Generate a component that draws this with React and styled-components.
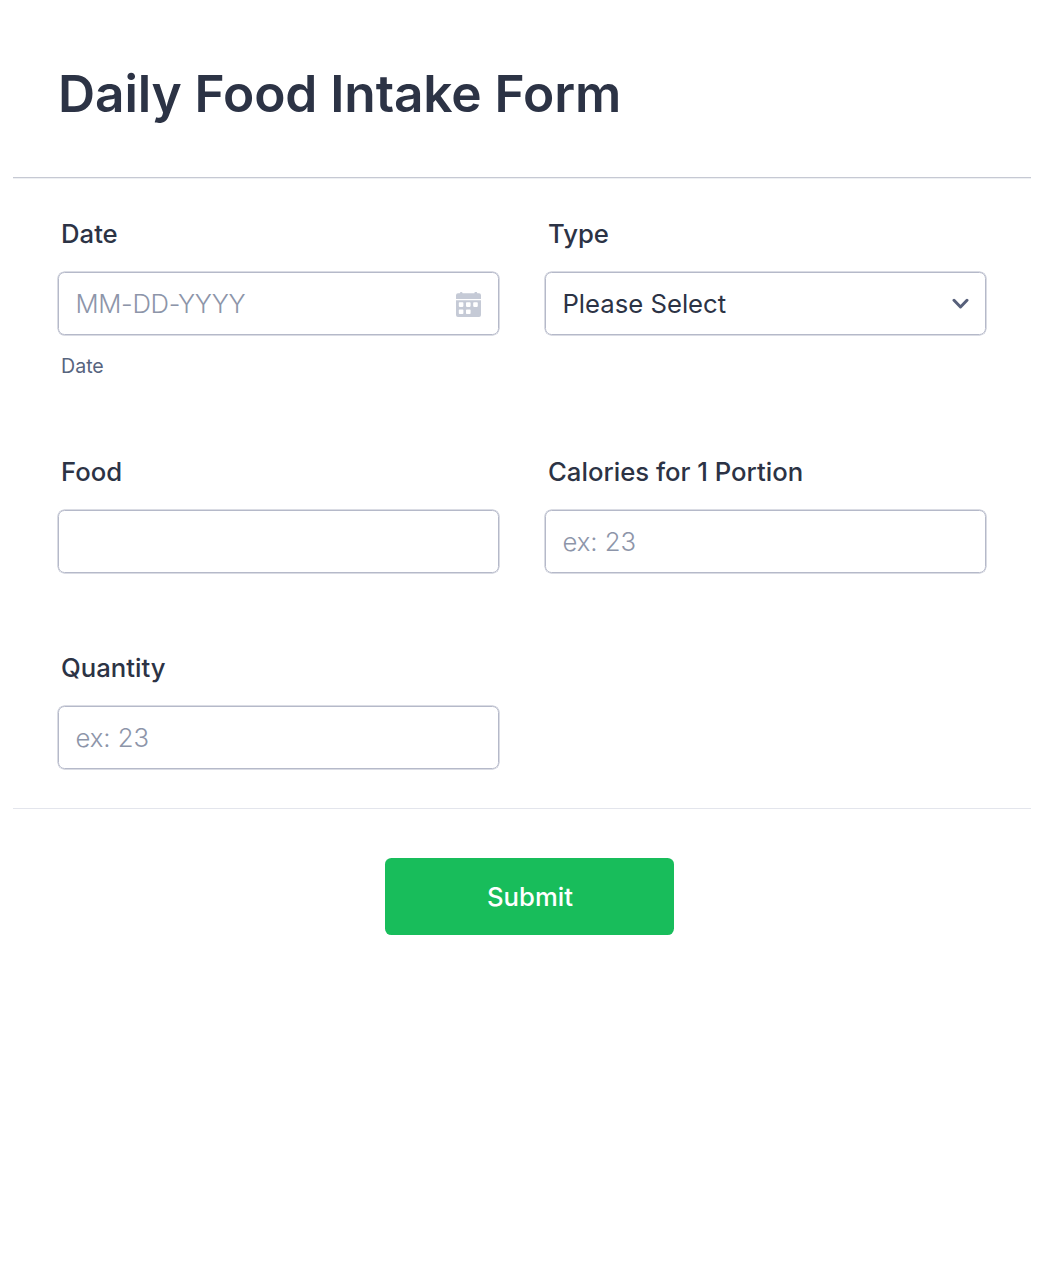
import React from 'react';
import styled, { createGlobalStyle } from 'styled-components';

const GlobalStyle = createGlobalStyle`
  :root {
    --ink: #2c3345;
    --muted: #57647e;
    --placeholder: #8d95a9;
    --border: #b5b9c9;
    --green: #18bd5b;
  }

  *,
  *::before,
  *::after {
    box-sizing: border-box;
  }

  body {
    margin: 0;
    background: #fff;
    color: var(--ink);
    font-family: Inter, sans-serif;
  }
`;

const Form = styled.form`
  min-height: 1285px;
  padding: 0 13px;
`;

const Header = styled.header`
  height: 178px;
  padding: 62px 45px 0;
  border-bottom: 1px solid #c6c9d3;
  box-shadow: 0 0.4px 0 #d5d8e0;
`;

const Title = styled.h1`
  margin: 0;
  font-size: 51.4px;
  font-weight: 600;
  letter-spacing: -0.1px;
  line-height: 62px;
`;

const Fields = styled.div`
  display: grid;
  grid-template-columns: 441px 441px;
  column-gap: 46px;
  padding: 40px 45px 39px;
`;

const FieldGroup = styled.div`
  padding-bottom: ${props => props.$space || 0}px;
`;

const Label = styled.label`
  display: block;
  margin: 0 0 23px 3px;
  font-size: 25.7px;
  font-weight: 500;
  line-height: 31px;
`;

const Control = styled.div`
  display: flex;
  align-items: center;
  height: 63px;
  padding: 0 ${props => props.$end || 17}px 0 16.4px;
  border: 1px solid var(--border);
  border-radius: 6.4px;
  box-shadow: 0 0 0 0.5px var(--border);
`;

const Input = styled.input`
  flex: 1;
  min-width: 0;
  height: 100%;
  padding: 0;
  border: 0;
  outline: 0;
  background: transparent;
  color: var(--ink);
  font: 300 25.7px Inter, sans-serif;
  letter-spacing: ${props => props.$tracking || 0}px;

  &::placeholder {
    color: var(--placeholder);
    opacity: 1;
  }
`;

const Select = styled.select`
  flex: 1;
  min-width: 0;
  height: 100%;
  padding: 0;
  border: 0;
  outline: 0;
  appearance: none;
  background: transparent;
  color: var(--ink);
  font: 400 25.7px Inter, sans-serif;
`;

const SubLabel = styled.span`
  display: block;
  margin: 19px 0 0 3px;
  color: var(--muted);
  font-size: 19.6px;
  line-height: 24px;
`;

const Footer = styled.footer`
  display: flex;
  justify-content: center;
  padding: 49px 0 0 15.9px;
  border-top: 1px solid #e3e5ec;
`;

const SubmitButton = styled.button`
  width: 289px;
  height: 77px;
  padding: 0;
  border: 0;
  border-radius: 6.4px;
  background: var(--green);
  color: #fff;
  font: 500 25.7px Inter, sans-serif;
`;

const CalendarSvg = styled.svg`
  flex: none;
  margin-top: 2px;
`;

const CalendarIcon = () => (
  <CalendarSvg width="25" height="25" viewBox="0 0 25 25" fill="#c5cad6">
    <path d="M5.2 0a1.4 1.4 0 0 1 1.4 1.2h11.8a1.4 1.4 0 0 1 2.8 0H23a2 2 0 0 1 2 2V7H0V3.200a2 2 0 0 1 2-2h1.800A1.400 1.400 0 0 1 5.200 0z" />
    <path
      fillRule="evenodd"
      d="M0 8.300h25V23a2 2 0 0 1-2 2H2a2 2 0 0 1-2-2zM3.600 10.300a.8.8 0 0 0-.8.8v3a.8.8 0 0 0 .8.8h3a.8.8 0 0 0 .8-.8v-3a.8.8 0 0 0-.8-.8zM10.800 10.300a.8.8 0 0 0-.8.8v3a.8.8 0 0 0 .8.8h3a.8.8 0 0 0 .8-.8v-3a.8.8 0 0 0-.8-.8zM18 10.300a.8.8 0 0 0-.8.8v3a.8.8 0 0 0 .8.8h3a.8.8 0 0 0 .8-.8v-3a.8.8 0 0 0-.8-.8zM3.600 17.400a.8.8 0 0 0-.8.8v3a.8.8 0 0 0 .8.8h3a.8.8 0 0 0 .8-.8v-3a.8.8 0 0 0-.8-.8zM10.800 17.400a.8.8 0 0 0-.8.8v3a.8.8 0 0 0 .8.8h3a.8.8 0 0 0 .8-.8v-3a.8.8 0 0 0-.8-.8z"
    />
  </CalendarSvg>
);

const ChevronIcon = () => (
  <svg
    width="17"
    height="12"
    viewBox="0 0 17 12"
    fill="none"
    stroke="#57607a"
    strokeWidth="3"
    strokeLinecap="round"
    strokeLinejoin="round"
  >
    <path d="M2 2.300l6.500 6.700L15 2.300" />
  </svg>
);

const App = () => {
  return (
    <>
      <GlobalStyle />
      <Form onSubmit={e => e.preventDefault()}>
        <Header>
          <Title>Daily Food Intake Form</Title>
        </Header>
        <Fields>
          <FieldGroup $space={78}>
            <Label htmlFor="date">Date</Label>
            <Control>
              <Input id="date" placeholder="MM-DD-YYYY" $tracking={-0.3} />
              <CalendarIcon />
            </Control>
            <SubLabel>Date</SubLabel>
          </FieldGroup>
          <FieldGroup>
            <Label htmlFor="type">Type</Label>
            <Control $end={16}>
              <Select id="type">
                <option>Please Select</option>
              </Select>
              <ChevronIcon />
            </Control>
          </FieldGroup>
          <FieldGroup $space={79}>
            <Label htmlFor="food">Food</Label>
            <Control>
              <Input id="food" />
            </Control>
          </FieldGroup>
          <FieldGroup>
            <Label htmlFor="calories">Calories for 1 Portion</Label>
            <Control>
              <Input id="calories" placeholder="ex: 23" />
            </Control>
          </FieldGroup>
          <FieldGroup>
            <Label htmlFor="quantity">Quantity</Label>
            <Control>
              <Input id="quantity" placeholder="ex: 23" />
            </Control>
          </FieldGroup>
        </Fields>
        <Footer>
          <SubmitButton type="submit">Submit</SubmitButton>
        </Footer>
      </Form>
    </>
  );
};

export default App;
